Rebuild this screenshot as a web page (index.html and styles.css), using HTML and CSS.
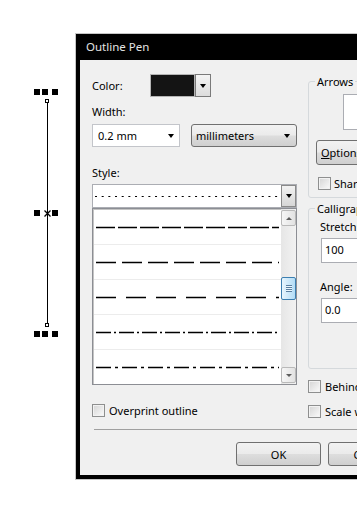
FILE: index.html
```html
<!DOCTYPE html>
<html lang="en">
<head>
    <meta charset="UTF-8">
    <meta name="viewport" content="width=device-width, initial-scale=1.0">
    <title>Outline Pen</title>
    <link rel="stylesheet" href="styles.css">
</head>
<body>
    <!-- selection handles of the object on the canvas -->
    <svg class="handles" width="70" height="345" viewBox="0 0 70 345">
        <rect x="34" y="89" width="6" height="6"/>
        <rect x="42" y="89" width="6" height="6"/>
        <rect x="52" y="89" width="6" height="6"/>
        <rect x="45.5" y="99.5" width="3" height="3" fill="#fff" stroke="#000"/>
        <line x1="47.5" y1="103" x2="47.5" y2="323" stroke="#000"/>
        <rect x="34" y="210" width="6" height="6"/>
        <rect x="52" y="210" width="6" height="6"/>
        <path d="M44.5 210.5 L50.5 216.5 M50.5 210.5 L44.5 216.5" stroke="#000" stroke-width="1.3"/>
        <rect x="45.5" y="323.5" width="3" height="3" fill="#fff" stroke="#000"/>
        <rect x="34" y="331" width="6" height="6"/>
        <rect x="42" y="331" width="6" height="6"/>
        <rect x="52" y="331" width="6" height="6"/>
    </svg>

    <div class="window">
        <div class="titlebar">Outline Pen</div>
        <div class="frame">
            <div class="content">
                <div class="columns">
                    <div class="col-left">
                        <div class="color-row">
                            <span class="label color-label">Color:</span>
                            <div class="color-pick">
                                <span class="swatch"></span>
                                <span class="drop-btn"><i class="tri"></i></span>
                            </div>
                        </div>
                        <div class="label width-label">Width:</div>
                        <div class="width-row">
                            <div class="select select-white"><span>0.2 mm</span><i class="tri"></i></div>
                            <div class="select select-btn"><span>millimeters</span><i class="tri"></i></div>
                        </div>
                        <div class="label style-label">Style:</div>
                        <div class="combo">
                            <div class="combo-value">
                                <svg width="186" height="3"><line x1="2" y1="1.5" x2="186" y2="1.5" stroke="#000" stroke-width="1.2" stroke-dasharray="2 4.67"/></svg>
                            </div>
                            <span class="combo-btn"><i class="tri"></i></span>
                        </div>
                        <div class="list">
                            <div class="rows">
                                <div class="row"><svg width="183" height="3"><line x1="0" y1="1.5" x2="183" y2="1.5" stroke="#000" stroke-width="1.6" stroke-dasharray="19 3"/></svg></div>
                                <div class="row"><svg width="183" height="3"><line x1="0" y1="1.5" x2="183" y2="1.5" stroke="#000" stroke-width="1.6" stroke-dasharray="20 6"/></svg></div>
                                <div class="row"><svg width="183" height="3"><line x1="0" y1="1.5" x2="183" y2="1.5" stroke="#000" stroke-width="1.6" stroke-dasharray="20 10"/></svg></div>
                                <div class="row"><svg width="183" height="3"><line x1="0" y1="1.5" x2="183" y2="1.5" stroke="#000" stroke-width="1.6" stroke-dasharray="15 3 2 3"/></svg></div>
                                <div class="row"><svg width="183" height="3"><line x1="0" y1="1.5" x2="183" y2="1.5" stroke="#000" stroke-width="1.6" stroke-dasharray="15 4 3 4"/></svg></div>
                            </div>
                            <div class="scrollbar">
                                <span class="sb-btn"><i class="tri-up"></i></span>
                                <div class="sb-track"><span class="sb-thumb"><i class="grip"></i></span></div>
                                <span class="sb-btn"><i class="tri-down"></i></span>
                            </div>
                        </div>
                        <label class="check overprint"><span class="box"></span>Overprint outline</label>
                    </div>

                    <div class="col-right">
                        <fieldset class="group arrows">
                            <legend>Arrows</legend>
                            <div class="arrow-boxes">
                                <div class="arrow-box"></div>
                                <div class="arrow-box"></div>
                            </div>
                            <div class="option-row">
                                <button class="btn btn-option"><u>O</u>ptions <i class="tri"></i></button>
                                <button class="btn btn-option">Options <i class="tri"></i></button>
                            </div>
                            <label class="check share"><span class="box"></span>Share attributes</label>
                        </fieldset>
                        <fieldset class="group calli">
                            <legend>Calligraphy</legend>
                            <div class="label field-label">Stretch:</div>
                            <div class="spin">100</div>
                            <div class="label field-label angle-label">Angle:</div>
                            <div class="spin">0.0</div>
                        </fieldset>
                        <label class="check behind"><span class="box"></span>Behind fill</label>
                        <label class="check scale"><span class="box"></span>Scale with image</label>
                    </div>
                </div>

                <div class="sep"></div>
                <div class="buttons">
                    <button class="btn btn-dlg">OK</button>
                    <button class="btn btn-dlg">Cancel</button>
                    <button class="btn btn-dlg">Help</button>
                </div>
            </div>
        </div>
    </div>
</body>
</html>
```

FILE: styles.css
```css
body {
    margin: 0;
    width: 357px;
    height: 518px;
    overflow: hidden;
    position: relative;
    background: #fff;
    font-family: "Noto Sans", "Open Sans", sans-serif;
    font-size: 11px;
    color: #000;
}
.handles {
    position: absolute;
    left: 0;
    top: 0;
}

/* window frame */
.window {
    position: absolute;
    left: 75px;
    top: 33px;
    width: 445px;
    border: 1px solid #c6c6c6;
    background: #000;
}
.titlebar {
    height: 26px;
    line-height: 25px;
    padding-left: 10px;
    color: #e4e4e4;
    font-size: 11.5px;
}
.frame {
    padding: 0 4px 4px;
}
.content {
    background: #f0f0f0;
    height: 415px;
    padding: 0 12px;
    box-sizing: border-box;
}
.columns {
    display: flex;
    gap: 11px;
}
.col-left {
    width: 205px;
    padding-top: 14px;
}
.col-right {
    flex: 1;
}
.label {
    line-height: 15px;
}

/* little triangles */
.tri {
    display: inline-block;
    width: 0;
    height: 0;
    border-left: 3.5px solid transparent;
    border-right: 3.5px solid transparent;
    border-top: 4px solid #000;
}

/* color */
.color-row {
    display: flex;
    align-items: center;
    height: 23px;
}
.color-label {
    width: 58px;
}
.color-pick {
    display: flex;
    height: 23px;
}
.swatch {
    width: 45px;
    box-sizing: border-box;
    border: 1px solid #b4b4b4;
    background: #141414;
}
.drop-btn {
    width: 16px;
    box-sizing: border-box;
    border: 1px solid #7a7a7a;
    background: linear-gradient(#f4f4f4, #dcdcdc);
    display: flex;
    align-items: center;
    justify-content: center;
}

/* width */
.width-label {
    margin-top: 7px;
}
.width-row {
    display: flex;
    gap: 11px;
    margin-top: 5px;
}
.select {
    height: 23px;
    box-sizing: border-box;
    display: flex;
    align-items: center;
    justify-content: space-between;
}
.select-white {
    width: 88px;
    border: 1px solid #c3c5ca;
    background: #fff;
    padding: 0 5px 0 5px;
}
.select-btn {
    width: 106px;
    border: 1px solid #707070;
    border-radius: 3px;
    background: linear-gradient(#f2f2f2 0%, #ebebeb 48%, #dddddd 52%, #cfcfcf 100%);
    padding: 0 6px 0 4px;
}

/* style */
.style-label {
    margin-top: 18px;
}
.combo {
    margin-top: 4px;
    height: 24px;
    box-sizing: border-box;
    border: 1px solid #abadb3;
    background: #fff;
    display: flex;
}
.combo-value {
    flex: 1;
    display: flex;
    align-items: center;
}
.combo-btn {
    width: 15px;
    box-sizing: border-box;
    border: 1px solid #8a8a8a;
    background: linear-gradient(#f2f2f2, #d6d6d6);
    display: flex;
    align-items: center;
    justify-content: center;
}
.list {
    height: 177px;
    box-sizing: border-box;
    border: 1px solid #8c8e94;
    box-shadow: inset 1px 1px 0 #c4c4c4;
    background: #fff;
    display: flex;
}
.rows {
    flex: 1;
    padding-top: 1px;
    padding-left: 1px;
    overflow: hidden;
}
.row {
    height: 34px;
    border-bottom: 1px solid #ececec;
    display: flex;
    align-items: center;
    padding-left: 2px;
}
.scrollbar {
    width: 15px;
    display: flex;
    flex-direction: column;
    padding: 1px 0 1px 0;
    background: linear-gradient(to right, #e6e6e6, #f2f2f2);
}
.sb-btn {
    height: 16px;
    box-sizing: border-box;
    border: 1px solid #b9b9b9;
    border-radius: 2px;
    background: linear-gradient(to right, #f6f6f6, #e2e2e2);
    display: flex;
    align-items: center;
    justify-content: center;
}
.tri-up, .tri-down {
    width: 0;
    height: 0;
    border-left: 3px solid transparent;
    border-right: 3px solid transparent;
}
.tri-up {
    border-bottom: 3px solid #5c5c5c;
}
.tri-down {
    border-top: 3px solid #5c5c5c;
}
.sb-track {
    flex: 1;
    padding-top: 51px;
}
.sb-thumb {
    display: flex;
    align-items: center;
    justify-content: center;
    height: 23px;
    box-sizing: border-box;
    border: 1px solid #3c7fb1;
    border-radius: 2px;
    background: linear-gradient(to right, #e8f5fd, #b2dcf6);
}
.grip {
    width: 6px;
    height: 7px;
    background: repeating-linear-gradient(#5a7fa0 0 1px, #eaf6fd 1px 2px);
}

/* checkboxes */
.check {
    display: flex;
    align-items: center;
    gap: 4px;
    height: 13px;
    line-height: 13px;
    white-space: nowrap;
}
.box {
    width: 13px;
    height: 13px;
    box-sizing: border-box;
    flex: none;
    border: 1px solid #8e8f8f;
    background: linear-gradient(135deg, #d4d4d4, #fbfbfb);
    box-shadow: inset 0 0 0 1px #f2f2f2;
}
.overprint {
    margin-top: 19px;
}

/* right column */
.group {
    margin: 0;
    padding: 0 6px;
    border: 1px solid #d5d9dc;
    border-radius: 3px;
    min-width: 0;
}
.group legend {
    padding: 0 2px;
    line-height: 15px;
}
.arrows {
    margin-top: 14px;
    padding-bottom: 7px;
}
.arrow-boxes {
    display: flex;
    gap: 30px;
    margin-top: 5px;
    margin-left: 28px;
}
.arrow-box {
    width: 52px;
    height: 36px;
    box-sizing: border-box;
    border: 1px solid #abadb3;
    background: #fff;
}
.option-row {
    display: flex;
    gap: 20px;
    margin-top: 10px;
    margin-left: 1px;
}
.btn {
    font: inherit;
    color: #000;
    border: 1px solid #707070;
    border-radius: 3px;
    background: linear-gradient(#f2f2f2 0%, #ebebeb 48%, #dddddd 52%, #cfcfcf 100%);
    padding: 0;
}
.btn-option {
    width: 68px;
    height: 25px;
    text-align: left;
    padding-left: 4px;
}
.btn-option .tri {
    margin-left: 4px;
    vertical-align: middle;
}
.share {
    margin-top: 12px;
    margin-left: 3px;
    gap: 3px;
}
.calli {
    margin-top: 3px;
    height: 168px;
    box-sizing: border-box;
}
.field-label {
    margin-top: 3px;
    margin-left: 5px;
}
.angle-label {
    margin-top: 16px;
}
.spin {
    width: 60px;
    height: 25px;
    box-sizing: border-box;
    margin-top: 4px;
    margin-left: 6px;
    border: 1px solid #abadb3;
    background: #fff;
    padding-left: 3px;
    line-height: 21px;
}
.behind {
    margin-top: 11px;
}
.scale {
    margin-top: 12px;
}

/* bottom */
.sep {
    margin-top: 11px;
    margin-left: 2px;
    border-top: 1px solid #a0a0a0;
}
.buttons {
    display: flex;
    justify-content: flex-end;
    gap: 7px;
    margin-top: 12px;
}
.btn-dlg {
    width: 85px;
    height: 24px;
}
```
